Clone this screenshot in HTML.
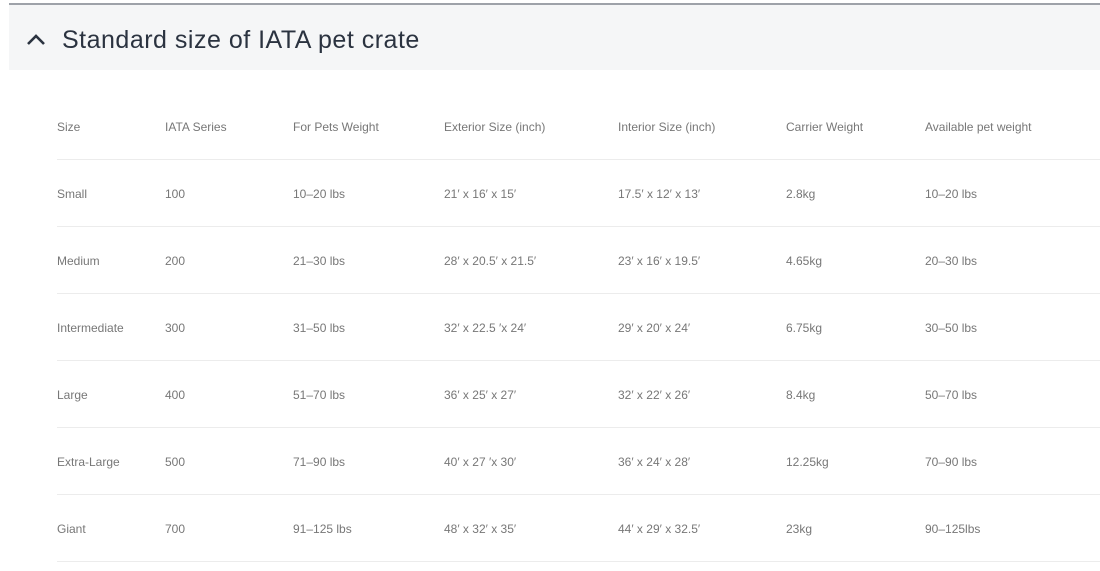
<!DOCTYPE html>
<html><head><style>
body{margin:0;width:1100px;height:571px;background:#fff;font-family:"Liberation Sans",sans-serif;position:relative;overflow:hidden}
.top{position:absolute;left:9px;top:3px;width:1091px;height:2px;background:#9ea2a9}
.hd{position:absolute;left:9px;top:5px;width:1091px;height:65px;background:#f5f6f7}
.hd span{position:absolute;left:53px;top:21px;font-size:25px;color:#2b3340;letter-spacing:0.5px}
.hd svg{position:absolute;left:17px;top:28px}
.row{position:absolute;left:57px;width:1043px;height:66px;border-bottom:1px solid #ececec}
.row div{position:absolute;top:1px;line-height:67px;font-size:12px;color:#777}
</style></head><body>
<div class="top"></div>
<div class="hd"><svg width="20" height="14" viewBox="0 0 20 14"><path d="M2 11 L10 3 L18 11" fill="none" stroke="#2b3340" stroke-width="2.6"/></svg><span>Standard size of IATA pet crate</span></div>
<div id="t"></div>
<script>
var rows=[["Size","IATA Series","For Pets Weight","Exterior Size (inch)","Interior Size (inch)","Carrier Weight","Available pet weight"],
["Small","100","10–20 lbs","21′ x 16′ x 15′","17.5′ x 12′ x 13′","2.8kg","10–20 lbs"],
["Medium","200","21–30 lbs","28′ x 20.5′ x 21.5′","23′ x 16′ x 19.5′","4.65kg","20–30 lbs"],
["Intermediate","300","31–50 lbs","32′ x 22.5 ′x 24′","29′ x 20′ x 24′","6.75kg","30–50 lbs"],
["Large","400","51–70 lbs","36′ x 25′ x 27′","32′ x 22′ x 26′","8.4kg","50–70 lbs"],
["Extra-Large","500","71–90 lbs","40′ x 27 ′x 30′","36′ x 24′ x 28′","12.25kg","70–90 lbs"],
["Giant","700","91–125 lbs","48′ x 32′ x 35′","44′ x 29′ x 32.5′","23kg","90–125lbs"]];
var xs=[0,108,236,387,561,729,868],h="";
rows.forEach(function(r,i){h+='<div class="row" style="top:'+(93+i*67)+'px">';r.forEach(function(c,j){h+='<div style="left:'+xs[j]+'px">'+c+'</div>'});h+='</div>'});
document.getElementById('t').innerHTML=h;
</script>
</body></html>
